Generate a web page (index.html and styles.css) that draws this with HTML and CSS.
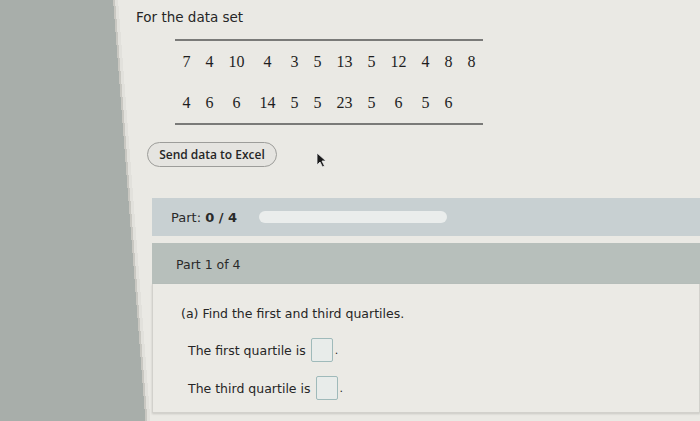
FILE: index.html
```html
<!DOCTYPE html>
<html>
<head>
<meta charset="utf-8">
<link rel="stylesheet" href="styles.css">
</head>
<body>
<div class="page">
  <p class="intro">For the data set</p>
  <table class="data">
    <tr><td>7</td><td>4</td><td>10</td><td>4</td><td>3</td><td>5</td><td>13</td><td>5</td><td>12</td><td>4</td><td>8</td><td>8</td></tr>
    <tr><td>4</td><td>6</td><td>6</td><td>14</td><td>5</td><td>5</td><td>23</td><td>5</td><td>6</td><td>5</td><td>6</td><td></td></tr>
  </table>
  <div class="btnrow">
    <button class="excel">Send data to Excel</button>
    <svg class="cursor" width="12" height="16" viewBox="0 0 12 16"><path d="M1 1 L1 13 L4 10 L6.5 15 L8.5 14 L6 9 L10 9 Z" fill="#1b1b1b" stroke="#eee" stroke-width="0.8"/></svg>
  </div>
  <div class="progress">
    <span class="plabel">Part: <b>0 / 4</b></span>
    <div class="pbar"></div>
  </div>
  <div class="parthead">Part 1 of 4</div>
  <div class="partbody">
    <p class="q">(a) Find the first and third quartiles.</p>
    <div class="ans"><span>The first quartile is</span><span class="box"></span><span class="dot">.</span></div>
    <div class="ans ans2"><span>The third quartile is</span><span class="box"></span><span class="dot">.</span></div>
  </div>
</div>
</body>
</html>
```
FILE: styles.css
```css
body {
  margin: 0;
  width: 700px;
  height: 421px;
  overflow: hidden;
  background: linear-gradient(85.6deg, #a8aeaa 0 145px, #c9c8c2 145px 147px, #e2e1dc 147px 150px, #eae9e4 150px);
  font-family: "DejaVu Sans", Verdana, sans-serif;
  color: #262626;
}
.page {
  padding: 8px 0 0 136px;
}
.intro {
  margin: 0;
  font-size: 13.5px;
  line-height: 18px;
}
.data {
  margin: 13px 0 0 39px;
  border-collapse: collapse;
  border-top: 2px solid #7a7a78;
  border-bottom: 2px solid #7a7a78;
  font-family: "Liberation Serif", "Times New Roman", serif;
  font-size: 16px;
  color: #1e1e1e;
}
.data td {
  padding: 0 7.5px;
  height: 41px;
  text-align: center;
  vertical-align: middle;
}
.btnrow {
  display: flex;
  align-items: center;
  margin: 17px 0 0 11px;
  position: relative;
}
.excel {
  width: 130px;
  height: 25px;
  padding: 0;
  border: 1.5px solid #9d9d9a;
  border-radius: 13px;
  background: #e5e4e0;
  font-family: "Open Sans", sans-serif;
  font-size: 12px;
  font-weight: 600;
  color: #262626;
}
.cursor {
  position: absolute;
  left: 169px;
  top: 10px;
}
.progress {
  display: flex;
  align-items: center;
  margin: 31px 0 0 16px;
  height: 38px;
  padding-left: 19px;
  background: #c8d0d2;
}
.plabel {
  font-size: 13px;
  color: #2a2a2a;
}
.plabel b {
  font-weight: bold;
}
.pbar {
  width: 188px;
  height: 12px;
  margin-left: 22px;
  border-radius: 6px;
  background: #eaedec;
}
.parthead {
  margin: 7px 0 0 16px;
  height: 41px;
  line-height: 43px;
  padding-left: 24px;
  background: #b7bfbb;
  font-size: 12.5px;
  color: #2a2a2a;
}
.partbody {
  margin-left: 16px;
  height: 107px;
  padding: 21px 0 0 28px;
  border: 1px solid #d2d1cc;
  border-top: none;
  background: #ebeae5;
  box-shadow: 0 1px 2px rgba(0, 0, 0, 0.15);
}
.q {
  margin: 0;
  font-size: 12.5px;
  line-height: 18px;
}
.ans {
  display: flex;
  align-items: center;
  gap: 5px;
  margin: 15px 0 0 7px;
  font-size: 12.5px;
  height: 24px;
}
.ans2 {
  margin-top: 14px;
}
.box {
  width: 20px;
  height: 22px;
  border: 1px solid #9fbaba;
  border-radius: 2px;
  background: #e8ecea;
}
.dot {
  margin-left: -3px;
  font-size: 11px;
}
```
